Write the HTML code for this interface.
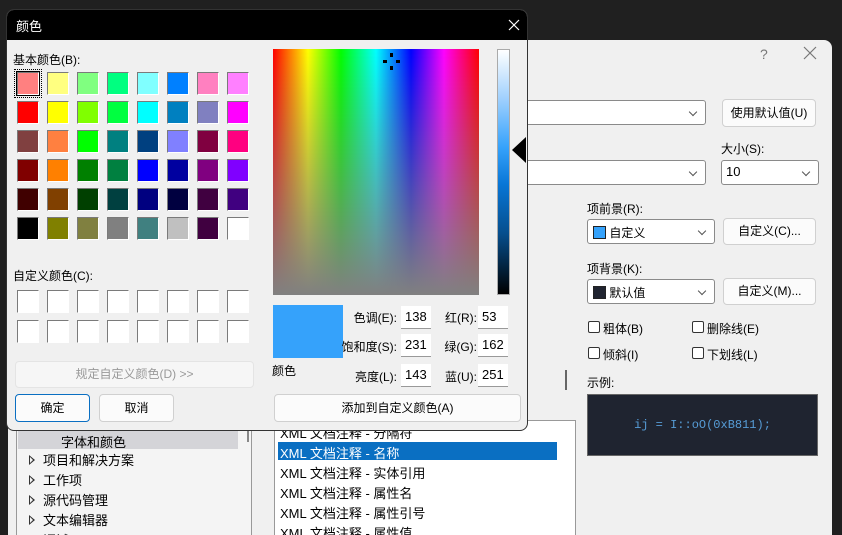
<!DOCTYPE html>
<html style="width:842px;height:535px;overflow:hidden"><head><meta charset="utf-8"><style>
*{box-sizing:border-box;margin:0;padding:0}
body{width:842px;height:535px;overflow:hidden;background:#202020;position:relative;font-family:"Liberation Sans","Noto Sans CJK SC",sans-serif;font-size:12px;color:#000}
.a{position:absolute}
.back{left:8px;top:40px;width:824px;height:495px;background:#f0f0f0;border-radius:8px 8px 0 0}
.combo{position:absolute;background:#fff;border:1px solid #8a8a8a;border-radius:3px;height:25px}
.combo:after{content:"";position:absolute;right:9px;top:8px;width:5px;height:5px;border-right:1px solid #555;border-bottom:1px solid #555;transform:rotate(45deg)}
.btn{position:absolute;background:#fbfbfb;border:1px solid #d0d0d0;border-radius:4px;text-align:center;font-size:12px}
.cb{position:absolute;width:12px;height:12px;border:1px solid #333;border-radius:2px;background:#fff}
.dlg{left:6px;top:9px;width:522px;height:422px;background:#f0f0f0;border-radius:8px;overflow:hidden;border:1px solid #333}
.sw{position:absolute;width:22px;height:23px;border:1px solid;border-color:#7a7a7a #fff #fff #7a7a7a}
.in{position:absolute;width:30px;height:23px;background:#fff;border-bottom:1px solid #999;font-size:13px;padding:3px 4px}
.lb{position:absolute;font-size:12px;text-align:right}
.tri{display:inline-block;width:0;height:0;border-top:5px solid transparent;border-bottom:5px solid transparent;border-left:6px solid #333;margin:0 8px 0 2px;position:relative}
.tri:after{content:"";position:absolute;left:-5px;top:-3px;border-top:3px solid transparent;border-bottom:3px solid transparent;border-left:3px solid #f4f4f4}
</style></head><body>
<div class="a back"></div>
<div class="a" style="left:760px;top:46px;color:#777;font-size:14px">?</div>
<svg class="a" style="left:803px;top:46px" width="14" height="14"><path d="M1 1L13 13M13 1L1 13" stroke="#777" stroke-width="1.2"/></svg>
<div class="combo" style="left:500px;top:100px;width:206px"></div>
<div class="btn" style="left:722px;top:99px;width:94px;height:28px;line-height:26px">使用默认值(U)</div>
<div class="a" style="left:721px;top:140px">大小(S):</div>
<div class="combo" style="left:500px;top:160px;width:206px"></div>
<div class="combo" style="left:721px;top:160px;width:98px;padding:3px 4px;font-size:13px">10</div>
<div class="a" style="left:587px;top:200px">项前景(R):</div>
<div class="combo" style="left:587px;top:219px;width:128px;padding:4px 5px"><span style="display:inline-block;width:13px;height:13px;background:#35a2fb;border:1px solid #222;vertical-align:-2px"></span> 自定义</div>
<div class="btn" style="left:723px;top:218px;width:93px;height:27px;line-height:25px">自定义(C)...</div>
<div class="a" style="left:587px;top:260px">项背景(K):</div>
<div class="combo" style="left:587px;top:279px;width:128px;padding:4px 5px"><span style="display:inline-block;width:13px;height:13px;background:#202430;border:1px solid #222;vertical-align:-2px"></span> 默认值</div>
<div class="btn" style="left:723px;top:278px;width:93px;height:27px;line-height:25px">自定义(M)...</div>
<div class="cb" style="left:588px;top:321px"></div><div class="a" style="left:603px;top:320px">粗体(B)</div>
<div class="cb" style="left:692px;top:321px"></div><div class="a" style="left:707px;top:320px">删除线(E)</div>
<div class="cb" style="left:588px;top:347px"></div><div class="a" style="left:603px;top:346px">倾斜(I)</div>
<div class="cb" style="left:692px;top:347px"></div><div class="a" style="left:707px;top:346px">下划线(L)</div>
<div class="a" style="left:587px;top:374px">示例:</div>
<div class="a" style="left:587px;top:394px;width:231px;height:62px;background:#1f2430;border:1px solid #666;color:#569cd6;font-family:'Liberation Mono',monospace;font-size:12px;text-align:center;line-height:60px">ij = I::oO(0xB811);</div>
<!-- tree -->
<div class="a" style="left:16px;top:420px;width:236px;height:115px;background:#f4f4f4;border:1px solid #999;border-bottom:none;overflow:hidden">
<div class="a" style="left:1px;top:9px;width:220px;height:19px;background:#d4d4d8"></div>
<div class="a" style="left:230px;top:9px;width:2px;height:12px;background:#888"></div>
<div class="a" style="left:44px;top:11px;font-size:13px">字体和颜色</div>
<div class="a" style="left:10px;top:30px;font-size:13px;line-height:20px"><span class="tri"></span>项目和解决方案<br><span class="tri"></span>工作项<br><span class="tri"></span>源代码管理<br><span class="tri"></span>文本编辑器<br><span class="tri"></span>调试</div>
</div>
<!-- list -->
<div class="a" style="left:274px;top:420px;width:302px;height:115px;background:#fff;border:1px solid #999;border-bottom:none;overflow:hidden">
<div class="a" style="left:3px;top:21px;width:279px;height:18px;background:#0a6fc2"></div>
<div class="a" style="left:5px;top:3px;font-size:13px;line-height:20px;white-space:nowrap">XML 文档注释 - 分隔符<br><span style="color:#fff">XML 文档注释 - 名称</span><br>XML 文档注释 - 实体引用<br>XML 文档注释 - 属性名<br>XML 文档注释 - 属性引号<br>XML 文档注释 - 属性值<br>XML 文档注释 - 文本</div>
</div>
<div class="a" style="left:565px;top:370px;width:2px;height:20px;background:#666"></div>
<!-- color dialog -->
<div class="a dlg">
<div class="a" style="left:0;top:0;width:522px;height:30px;background:#000;color:#fff;font-size:13px;padding:6px 9px">颜色</div>
<svg class="a" style="left:501px;top:9px" width="12" height="12"><path d="M1 1L11 11M11 1L1 11" stroke="#fff" stroke-width="1.2"/></svg>
<div class="a" style="left:6px;top:41px;font-size:12px">基本颜色(B):</div>
<div id="g"></div>
<div class="a" style="left:6px;top:257px">自定义颜色(C):</div>
<div class="btn" style="left:8px;top:351px;width:239px;height:27px;line-height:25px;color:#999;background:#f6f6f6;border-color:#e4e4e4">规定自定义颜色(D) &gt;&gt;</div>
<div class="btn" style="left:8px;top:384px;width:75px;height:28px;line-height:26px;border:1px solid #0a6fc2">确定</div>
<div class="btn" style="left:92px;top:384px;width:75px;height:28px;line-height:26px">取消</div>
<div class="btn" style="left:267px;top:384px;width:247px;height:28px;line-height:26px">添加到自定义颜色(A)</div>
<div class="a" style="left:266px;top:39px;width:206px;height:246px;background:linear-gradient(to bottom,rgba(128,128,128,0),#808080),linear-gradient(to right,#f00,#ff0 17%,#0f0 33%,#0ff 50%,#00f 67%,#f0f 83%,#f00)"></div>
<div class="a" style="left:383px;top:43px;width:3px;height:4px;background:#000"></div>
<div class="a" style="left:383px;top:56px;width:3px;height:4px;background:#000"></div>
<div class="a" style="left:376px;top:50px;width:4px;height:3px;background:#000"></div>
<div class="a" style="left:389px;top:50px;width:4px;height:3px;background:#000"></div>
<div class="a" style="left:490px;top:39px;width:13px;height:246px;border:1px solid #aaa;background:linear-gradient(#fff,#9fd0fd 20%,#35a2fb 40%,#0876d6 55%,#064f8e 75%,#000)"></div>
<div class="a" style="left:505px;top:127px;width:0;height:0;border-top:13px solid transparent;border-bottom:13px solid transparent;border-right:14px solid #000"></div>
<div class="a" style="left:266px;top:295px;width:70px;height:53px;background:#35a2fb"></div>
<div class="a" style="left:265px;top:352px">颜色</div>
<div class="lb" style="left:330px;top:299px;width:60px">色调(E):</div>
<div class="lb" style="left:330px;top:328px;width:60px">饱和度(S):</div>
<div class="lb" style="left:330px;top:358px;width:60px">亮度(L):</div>
<div class="in" style="left:394px;top:296px">138</div><div class="in" style="left:394px;top:324px">231</div><div class="in" style="left:394px;top:354px">143</div>
<div class="lb" style="left:420px;top:299px;width:50px">红(R):</div>
<div class="lb" style="left:420px;top:328px;width:50px">绿(G):</div>
<div class="lb" style="left:420px;top:358px;width:50px">蓝(U):</div>
<div class="in" style="left:471px;top:296px">53</div><div class="in" style="left:471px;top:324px">162</div><div class="in" style="left:471px;top:354px">251</div>
</div>
<script>
var c=["#FF8080","#FFFF80","#80FF80","#00FF80","#80FFFF","#0080FF","#FF80C0","#FF80FF","#FF0000","#FFFF00","#80FF00","#00FF40","#00FFFF","#0080C0","#8080C0","#FF00FF","#804040","#FF8040","#00FF00","#008080","#004080","#8080FF","#800040","#FF0080","#800000","#FF8000","#008000","#008040","#0000FF","#0000A0","#800080","#8000FF","#400000","#804000","#004000","#004040","#000080","#000040","#400040","#400080","#000000","#808000","#808040","#808080","#408080","#C0C0C0","#400040","#FFFFFF"];
var h="";for(var i=0;i<48;i++){var x=10+30*(i%8),y=62+29*Math.floor(i/8);h+='<div class="sw" style="left:'+x+'px;top:'+y+'px;background:'+c[i]+'"></div>';}
h+='<div class="a" style="left:7px;top:59px;width:28px;height:29px;border:1px dotted #000"></div><div class="a" style="left:9px;top:61px;width:24px;height:25px;border:1px solid #000"></div>';
for(var i=0;i<16;i++){var x=10+30*(i%8),y=280+30*Math.floor(i/8);h+='<div class="sw" style="left:'+x+'px;top:'+y+'px;background:#fff"></div>';}
document.getElementById("g").innerHTML=h;
</script>
</body></html>
